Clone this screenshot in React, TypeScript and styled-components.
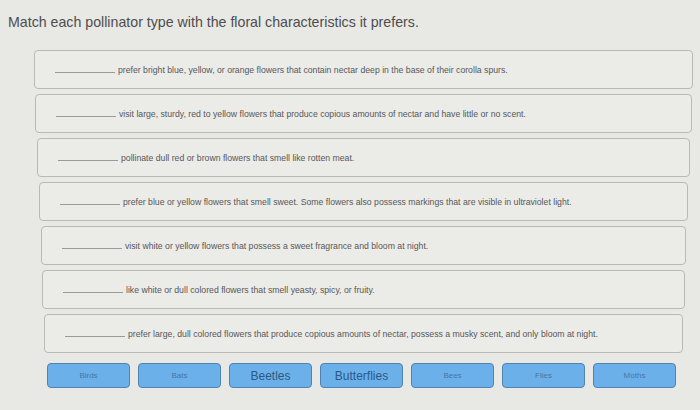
import React from "react";
import styled, { createGlobalStyle } from "styled-components";

const Global = createGlobalStyle`
  html, body { margin: 0; padding: 0; }
  body {
    background: #e8e8e5;
    font-family: "Liberation Sans", Arial, sans-serif;
    width: 700px;
    height: 410px;
    overflow: hidden;
  }
`;

const Page = styled.div`
  display: flex;
  flex-direction: column;
  padding: 13px 0 0 0;
`;

const Title = styled.h1`
  margin: 0 0 0 8px;
  font-size: 14.2px;
  font-weight: normal;
  color: #4e4e4e;
  line-height: 18px;
`;

const List = styled.div`
  display: flex;
  flex-direction: column;
  gap: 5px;
  margin-top: 19px;
`;

const Row = styled.div<{ $inset: number }>`
  display: flex;
  align-items: center;
  height: 39px;
  box-sizing: border-box;
  margin-left: ${(p) => 34 + p.$inset}px;
  margin-right: ${(p) => 7 + p.$inset}px;
  background: #ebebe8;
  border: 1.5px solid #b9b9b6;
  border-radius: 4px;
  padding-left: 20px;
`;

const Blank = styled.span`
  width: 60px;
  height: 1px;
  background: #9a9a98;
  margin-top: 6px;
  flex: none;
`;

const Desc = styled.span`
  margin-left: 3px;
  font-size: 8.7px;
  color: #585858;
  white-space: nowrap;
`;

const Bank = styled.div`
  display: flex;
  gap: 8px;
  margin: 10px 0 0 47px;
`;

const Chip = styled.button<{ $big?: boolean }>`
  width: 83px;
  height: 25px;
  box-sizing: border-box;
  background: #6cb0ea;
  border: 1.5px solid #4f84b2;
  border-radius: 4px;
  font-family: "Liberation Sans", Arial, sans-serif;
  font-size: ${(p) => (p.$big ? "12px" : "8px")};
  color: ${(p) => (p.$big ? "#2c5a84" : "#4677a5")};
  padding: 0;
  display: flex;
  align-items: center;
  justify-content: center;
`;

const rows = [
  "prefer bright blue, yellow, or orange flowers that contain nectar deep in the base of their corolla spurs.",
  "visit large, sturdy, red to yellow flowers that produce copious amounts of nectar and have little or no scent.",
  "pollinate dull red or brown flowers that smell like rotten meat.",
  "prefer blue or yellow flowers that smell sweet. Some flowers also possess markings that are visible in ultraviolet light.",
  "visit white or yellow flowers that possess a sweet fragrance and bloom at night.",
  "like white or dull colored flowers that smell yeasty, spicy, or fruity.",
  "prefer large, dull colored flowers that produce copious amounts of nectar, possess a musky scent, and only bloom at night.",
];
const insets = [0, 1, 3, 5, 7, 8, 10];

const chips: { label: string; big?: boolean }[] = [
  { label: "Birds" },
  { label: "Bats" },
  { label: "Beetles", big: true },
  { label: "Butterflies", big: true },
  { label: "Bees" },
  { label: "Flies" },
  { label: "Moths" },
];

export default function App() {
  return (
    <Page>
      <Global />
      <Title>Match each pollinator type with the floral characteristics it prefers.</Title>
      <List>
        {rows.map((r, i) => (
          <Row key={i} $inset={insets[i]}>
            <Blank />
            <Desc>{r}</Desc>
          </Row>
        ))}
      </List>
      <Bank>
        {chips.map((c) => (
          <Chip key={c.label} $big={c.big}>
            {c.label}
          </Chip>
        ))}
      </Bank>
    </Page>
  );
}
